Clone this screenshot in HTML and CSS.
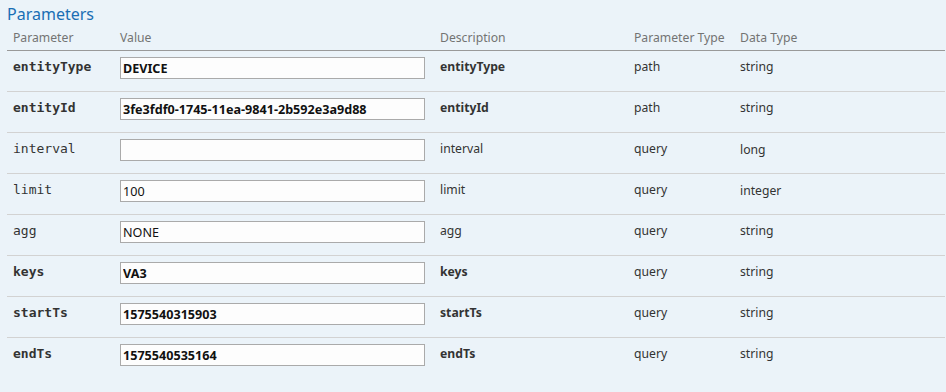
FILE: index.html
```html
<!DOCTYPE html>
<html lang="en">
<head>
  <meta charset="UTF-8">
  <title>Parameters</title>
  <link rel="stylesheet" href="styles.css">
</head>
<body>
  <h4 class="section-title">Parameters</h4>
  <table class="params">
    <thead>
      <tr>
        <th class="col-name">Parameter</th>
        <th class="col-value">Value</th>
        <th class="col-desc">Description</th>
        <th class="col-ptype">Parameter Type</th>
        <th class="col-dtype">Data Type</th>
      </tr>
    </thead>
    <tbody>
      <tr>
        <td class="code required">entityType</td>
        <td><input class="param-input required" type="text" value="DEVICE"></td>
        <td class="desc required">entityType</td>
        <td>path</td>
        <td>string</td>
      </tr>
      <tr>
        <td class="code required">entityId</td>
        <td><input class="param-input required" type="text" value="3fe3fdf0-1745-11ea-9841-2b592e3a9d88"></td>
        <td class="desc required">entityId</td>
        <td>path</td>
        <td>string</td>
      </tr>
      <tr>
        <td class="code">interval</td>
        <td><input class="param-input" type="text" value=""></td>
        <td class="desc">interval</td>
        <td>query</td>
        <td class="dtype-low">long</td>
      </tr>
      <tr>
        <td class="code">limit</td>
        <td><input class="param-input" type="text" value="100"></td>
        <td class="desc">limit</td>
        <td>query</td>
        <td class="dtype-low">integer</td>
      </tr>
      <tr>
        <td class="code">agg</td>
        <td><input class="param-input" type="text" value="NONE"></td>
        <td class="desc">agg</td>
        <td>query</td>
        <td>string</td>
      </tr>
      <tr>
        <td class="code required">keys</td>
        <td><input class="param-input required" type="text" value="VA3"></td>
        <td class="desc required">keys</td>
        <td>query</td>
        <td>string</td>
      </tr>
      <tr>
        <td class="code required">startTs</td>
        <td><input class="param-input required" type="text" value="1575540315903"></td>
        <td class="desc required">startTs</td>
        <td>query</td>
        <td>string</td>
      </tr>
      <tr>
        <td class="code required">endTs</td>
        <td><input class="param-input required" type="text" value="1575540535164"></td>
        <td class="desc required">endTs</td>
        <td>query</td>
        <td>string</td>
      </tr>
    </tbody>
  </table>
</body>
</html>
```

FILE: styles.css
```css
body {
  margin: 0;
  padding: 0 1px 0 7px;
  background-color: #ebf3f9;
  font-family: "Noto Sans", "Open Sans", sans-serif;
  font-size: 12.2px;
  color: #333;
}

.section-title {
  margin: 0;
  padding-top: 3px;
  height: 26px;
  font-size: 16px;
  font-weight: normal;
  color: #1a6eb4;
  line-height: 22px;
}

.params {
  width: 938px;
  border-collapse: collapse;
  table-layout: fixed;
}

.params th {
  text-align: left;
  font-weight: normal;
  color: #737373;
  padding: 0 0 3px 6px;
  height: 18px;
  line-height: 18px;
  border-bottom: 1px solid #999;
}

.col-name { width: 101px; }
.col-value { width: 314px; }
.col-desc { width: 188px; }
.col-ptype { width: 100px; }

.params td {
  vertical-align: top;
  padding: 7px 0 0 6px;
  height: 33px;
  line-height: 18px;
  border-bottom: 1px solid #d2d2d2;
}

.params tbody tr:last-child td {
  border-bottom: none;
}

.params td.code {
  font-family: "DejaVu Sans Mono", monospace;
  font-size: 13px;
}

.params .required {
  font-weight: bold;
}

.params td.dtype-low {
  padding-top: 8px;
  height: 32px;
}

.param-input {
  display: block;
  box-sizing: border-box;
  width: 305px;
  height: 22px;
  margin: -1px 0 0 0;
  padding: 0 0 0 2px;
  border: 1px solid #aaa;
  background-color: #fdfdfd;
  font-family: "Noto Sans", "Open Sans", sans-serif;
  font-size: 12.6px;
  color: #111;
}
```
